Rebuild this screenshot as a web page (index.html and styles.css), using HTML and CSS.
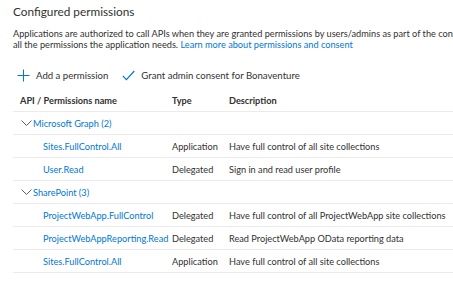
FILE: index.html
```html
<!DOCTYPE html>
<html lang="en">

<head>
    <meta charset="UTF-8">
    <meta name="viewport" content="width=device-width, initial-scale=1.0">
    <title>Configured permissions</title>
    <link rel="stylesheet" href="styles.css">
</head>

<body>
    <div class="page">
        <h2 class="title">Configured permissions</h2>
        <p class="intro">
            Applications are authorized to call APIs when they are granted permissions by users/admins as part of the consent process.<br>
            all the permissions the application needs. <a href="#">Learn more about permissions and consent</a>
        </p>

        <!-- toolbar -->
        <div class="toolbar">
            <button class="tool">
                <svg width="13" height="13" viewBox="0 0 13 13"><path d="M6.5 0.5v12M0.5 6.5h12" stroke="#0078d4" stroke-width="1" fill="none"/></svg>
                <span>Add a permission</span>
            </button>
            <button class="tool">
                <svg width="13" height="11" viewBox="0 0 13 11"><path d="M0.8 5.8l3.6 3.8L12.3 1" stroke="#0078d4" stroke-width="1.2" fill="none"/></svg>
                <span>Grant admin consent for Bonaventure</span>
            </button>
        </div>

        <table class="perms">
            <thead>
                <tr>
                    <th class="col-name">API / Permissions name</th>
                    <th class="col-type">Type</th>
                    <th>Description</th>
                </tr>
            </thead>
            <tbody>
                <tr class="group">
                    <td colspan="3"><svg class="chev" width="11" height="6" viewBox="0 0 11 6"><path d="M0.5 0.5L5.5 5.5L10.5 0.5" stroke="#605e5c" stroke-width="1" fill="none"/></svg><a href="#">Microsoft Graph (2)</a></td>
                </tr>
                <tr>
                    <td class="perm"><a href="#">Sites.FullControl.All</a></td>
                    <td>Application</td>
                    <td>Have full control of all site collections</td>
                </tr>
                <tr>
                    <td class="perm"><a href="#">User.Read</a></td>
                    <td>Delegated</td>
                    <td>Sign in and read user profile</td>
                </tr>
                <tr class="group">
                    <td colspan="3"><svg class="chev" width="11" height="6" viewBox="0 0 11 6"><path d="M0.5 0.5L5.5 5.5L10.5 0.5" stroke="#605e5c" stroke-width="1" fill="none"/></svg><a href="#">SharePoint (3)</a></td>
                </tr>
                <tr>
                    <td class="perm"><a href="#">ProjectWebApp.FullControl</a></td>
                    <td>Delegated</td>
                    <td>Have full control of all ProjectWebApp site collections</td>
                </tr>
                <tr>
                    <td class="perm"><a href="#">ProjectWebAppReporting.Read</a></td>
                    <td>Delegated</td>
                    <td>Read ProjectWebApp OData reporting data</td>
                </tr>
                <tr>
                    <td class="perm"><a href="#">Sites.FullControl.All</a></td>
                    <td>Application</td>
                    <td>Have full control of all site collections</td>
                </tr>
            </tbody>
        </table>
    </div>
</body>

</html>
```

FILE: styles.css
```css
body {
    margin: 0;
    padding: 0;
    overflow: hidden;
    background: #fff;
    color: #323130;
    font-family: Lato, "Open Sans", sans-serif;
}

.page {
    padding: 2px 0 0 13px;
    width: 620px;
}

a {
    color: #0078d4;
    text-decoration: none;
}

.title {
    margin: 0;
    font-size: 11.8px;
    font-weight: 400;
    line-height: 20px;
}

.intro {
    margin: 6px 0 0;
    font-size: 9.2px;
    line-height: 11px;
    white-space: nowrap;
}

/* toolbar */
.toolbar {
    display: flex;
    gap: 10px;
    margin-top: 17px;
    height: 16px;
    align-items: center;
}

.tool {
    display: flex;
    align-items: center;
    gap: 6px;
    padding: 0 0 0 4px;
    border: 0;
    background: none;
    font: inherit;
    font-size: 9.6px;
    color: #323130;
}

.perms {
    margin-top: 6px;
    table-layout: fixed;
    width: 607px;
    border-collapse: collapse;
    font-size: 9.2px;
    white-space: nowrap;
}

.perms th,
.perms td {
    height: 22px;
    padding: 0 0 0 7px;
    border-bottom: 1px solid #edebe9;
    text-align: left;
}

.perms th {
    font-weight: 700;
}

.col-name {
    width: 145px;
}

.col-type {
    width: 50px;
}

.perms td.perm {
    padding-left: 30px;
}

.chev {
    margin: 0 1px 2px 1px;
    vertical-align: middle;
}
```
